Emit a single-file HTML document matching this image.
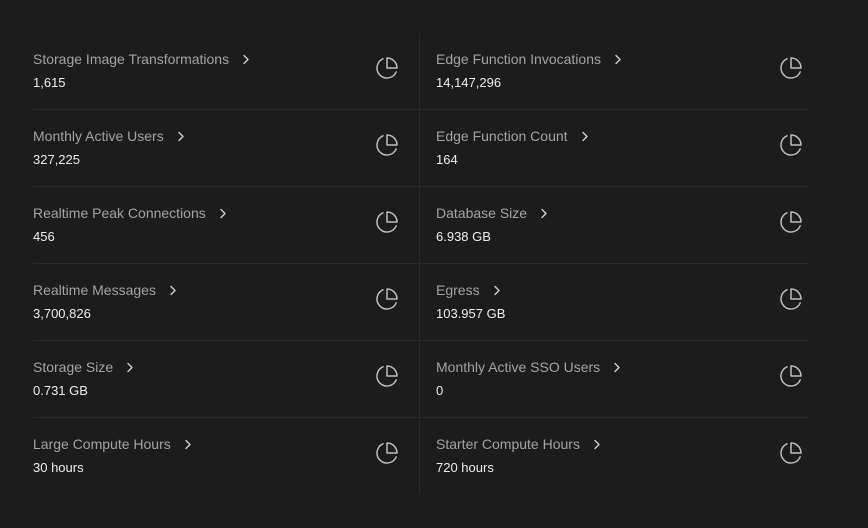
<!DOCTYPE html>
<html><head><meta charset="utf-8"><style>
html,body{margin:0;padding:0;background:#1c1c1c;width:868px;height:528px;overflow:hidden;font-family:"Liberation Sans",sans-serif;}
.vline{position:absolute;left:419px;top:33px;width:1px;height:461px;background:#2a2a2a;}
.cell{position:absolute;top:0;height:77px;}
.lbl{position:absolute;top:19px;left:0;font-size:14px;color:#a3a3a3;white-space:nowrap;}
.lbl svg{vertical-align:-1px;margin-left:13px}
.val{position:absolute;top:43px;left:0;font-size:13px;color:#ededed;white-space:nowrap;}
.ic{position:absolute;top:24px;}
.hl{position:absolute;height:1px;background:#2a2a2a;}
</style></head><body>
<div class="vline"></div>
<div id="c"></div>
<script>
const L=[["Storage Image Transformations","1,615"],["Monthly Active Users","327,225"],["Realtime Peak Connections","456"],["Realtime Messages","3,700,826"],["Storage Size","0.731 GB"],["Large Compute Hours","30 hours"]];
const R=[["Edge Function Invocations","14,147,296"],["Edge Function Count","164"],["Database Size","6.938 GB"],["Egress","103.957 GB"],["Monthly Active SSO Users","0"],["Starter Compute Hours","720 hours"]];
const chev='<svg width="8" height="11" viewBox="0 0 8 11"><path d="M2 1.5l4 4-4 4" fill="none" stroke="#d0d0d0" stroke-width="1.4" stroke-linecap="round" stroke-linejoin="round"/></svg>';
const pie='<svg width="24" height="24" viewBox="0 0 24 24" fill="none" stroke="#bdbdbd" stroke-width="1.5" stroke-linecap="round" stroke-linejoin="round"><path d="M21.21 15.89A10 10 0 1 1 8 2.83"/><path d="M22 12A10 10 0 0 0 12 2v10z"/></svg>';
let h='';
for(let i=0;i<6;i++){
 const y=32+i*77;
 h+=`<div class="cell" style="left:33px;top:${y}px;width:386px"><div class="lbl">${L[i][0]}${chev}</div><div class="val">${L[i][1]}</div><div class="ic" style="left:342px">${pie}</div></div>`;
 h+=`<div class="cell" style="left:436px;top:${y}px;width:372px"><div class="lbl">${R[i][0]}${chev}</div><div class="val">${R[i][1]}</div><div class="ic" style="left:343px">${pie}</div></div>`;
 if(i<5){h+=`<div class="hl" style="left:33px;top:${y+77}px;width:775px"></div>`;}
}
document.getElementById('c').innerHTML=h;
</script>
</body></html>
